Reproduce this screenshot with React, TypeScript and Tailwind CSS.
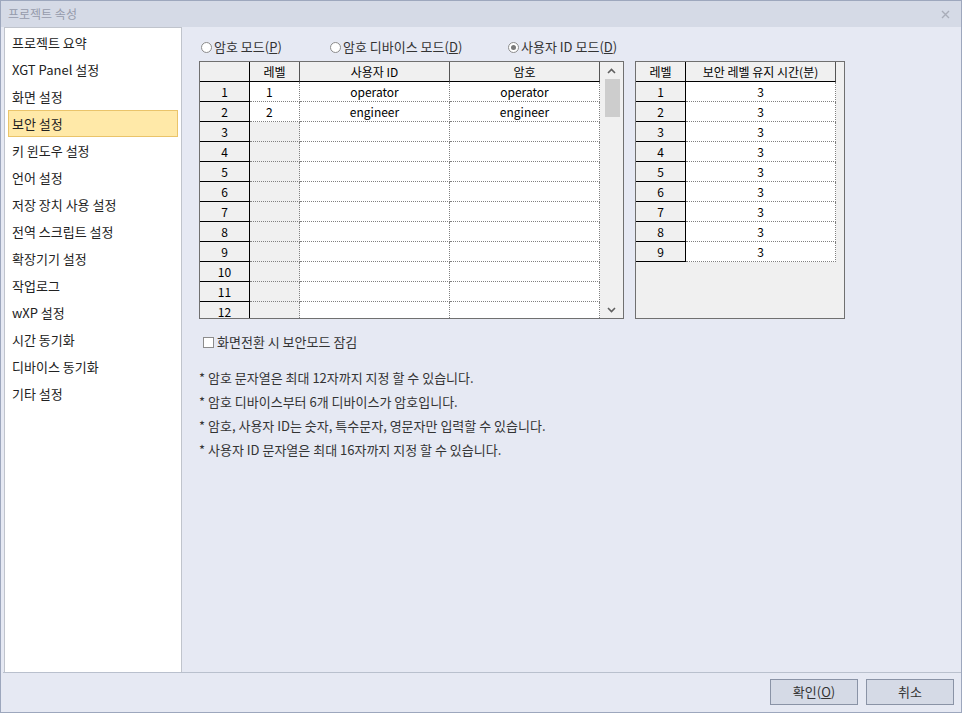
import React from 'react';

const menuItems = [
  '프로젝트 요약',
  'XGT Panel 설정',
  '화면 설정',
  '보안 설정',
  '키 윈도우 설정',
  '언어 설정',
  '저장 장치 사용 설정',
  '전역 스크립트 설정',
  '확장기기 설정',
  '작업로그',
  'wXP 설정',
  '시간 동기화',
  '디바이스 동기화',
  '기타 설정',
];

const users = [
  { level: '1', id: 'operator', pw: 'operator' },
  { level: '2', id: 'engineer', pw: 'engineer' },
];

const notes = [
  '* 암호 문자열은 최대 12자까지 지정 할 수 있습니다.',
  '* 암호 디바이스부터 6개 디바이스가 암호입니다.',
  '* 암호, 사용자 ID는 숫자, 특수문자, 영문자만 입력할 수 있습니다.',
  '* 사용자 ID 문자열은 최대 16자까지 지정 할 수 있습니다.',
];

const Radio = ({ label, hot, checked }: { label: string; hot: string; checked?: boolean }) => (
  <div className="flex items-center gap-[2px]">
    <span className="w-[11px] h-[11px] rounded-full border border-[#8c8c8c] bg-white flex items-center justify-center">
      {checked && <span className="w-[5px] h-[5px] rounded-full bg-[#7a7a7a]" />}
    </span>
    <span>
      {label}(<span className="underline">{hot}</span>)
    </span>
  </div>
);

const Chevron = ({ up }: { up?: boolean }) => (
  <svg width="9" height="6" viewBox="0 0 9 6">
    <path
      d={up ? 'M1 5 L4.5 1.5 L8 5' : 'M1 1 L4.5 4.5 L8 1'}
      fill="none"
      stroke="#606060"
      strokeWidth="1.6"
    />
  </svg>
);

export default function App() {
  const rows = Array.from({ length: 12 }, (_, i) => i + 1);
  const levels = Array.from({ length: 9 }, (_, i) => i + 1);

  return (
    <div
      className="w-[962px] h-[713px] border border-[#9da7bd] bg-[#e6e9f3] flex flex-col overflow-hidden text-[#222]"
      style={{ fontFamily: '"Noto Sans CJK KR", "Noto Sans", sans-serif' }}
    >
      {/* Title bar */}
      <div className="h-[26px] bg-[#d5dae6] flex items-center justify-between pl-[7px] pr-[11px] shrink-0">
        <span className="text-[12px] text-[#959bab]">프로젝트 속성</span>
        <svg width="9" height="9" viewBox="0 0 9 9">
          <path d="M1 1 L8 8 M8 1 L1 8" stroke="#a9adb9" strokeWidth="1.4" />
        </svg>
      </div>

      {/* Body */}
      <div className="flex flex-1 min-h-0 pl-[3px]">
        <div className="w-[178px] border-l border-t border-r border-[#c0c4cc] bg-white pt-[1px] px-[3px] shrink-0">
          {menuItems.map((item, i) => (
            <div
              key={item}
              className={
                i === 3
                  ? 'h-[27px] flex items-center pl-[3px] text-[13px] bg-[#ffe9a8] border border-[#eac46a]'
                  : 'h-[27px] flex items-center pl-[4px] text-[13px]'
              }
            >
              {item}
            </div>
          ))}
        </div>

        <div className="flex-1 flex flex-col pl-[17px] pt-[10px] text-[13px] text-[#333]">
          {/* Mode radios */}
          <div className="h-[20px] flex items-center pl-[2px]">
            <div className="w-[129px]">
              <Radio label="암호 모드" hot="P" />
            </div>
            <div className="w-[178px]">
              <Radio label="암호 디바이스 모드" hot="D" />
            </div>
            <Radio label="사용자 ID 모드" hot="D" checked />
          </div>

          {/* Tables */}
          <div className="flex gap-[11px] mt-[4px] text-[12px] text-black">
            <div className="w-[425px] h-[258px] border border-[#707070] flex bg-white">
              <div className="w-[400px] overflow-hidden">
                <div className="flex h-[20px]">
                  <div className="w-[50px] bg-[#f0f0f0] border-r border-b border-black" />
                  <div className="w-[50px] bg-[#f0f0f0] border-r border-b border-r-[#555] border-b-black flex items-center justify-center">레벨</div>
                  <div className="w-[150px] bg-[#f0f0f0] border-r border-b border-r-[#555] border-b-black flex items-center justify-center">사용자 ID</div>
                  <div className="w-[150px] bg-[#f0f0f0] border-r border-b border-r-[#555] border-b-black flex items-center justify-center">암호</div>
                </div>
                {rows.map((r) => {
                  const u = users[r - 1];
                  return (
                    <div key={r} className="flex h-[20px] shrink-0">
                      <div className="w-[50px] bg-[#f0f0f0] border-r border-b border-black flex items-center justify-center">{r}</div>
                      <div
                        className={
                          u
                            ? 'w-[50px] bg-white border-r border-b border-dotted border-[#808080] flex items-center pl-[16px]'
                            : 'w-[50px] bg-[#f0f0f0] border-r border-b border-dotted border-[#808080]'
                        }
                      >
                        {u?.level}
                      </div>
                      <div className="w-[150px] border-r border-b border-dotted border-[#808080] flex items-center justify-center">{u?.id}</div>
                      <div className="w-[150px] border-r border-b border-dotted border-[#808080] flex items-center justify-center">{u?.pw}</div>
                    </div>
                  );
                })}
              </div>
              <div className="w-[23px] bg-[#f0f0f0] flex flex-col items-center">
                <div className="h-[17px] flex items-center justify-center">
                  <Chevron up />
                </div>
                <div className="w-[15px] h-[38px] bg-[#cdcdcd] ml-[1px]" />
                <div className="flex-1" />
                <div className="h-[17px] flex items-center justify-center">
                  <Chevron />
                </div>
              </div>
            </div>

            <div className="w-[210px] h-[258px] border border-[#707070] bg-[#f0f0f0]">
              <div className="flex h-[20px]">
                <div className="w-[50px] bg-[#f0f0f0] border-r border-b border-black flex items-center justify-center">레벨</div>
                <div className="w-[150px] bg-[#f0f0f0] border-r border-b border-r-[#555] border-b-black flex items-center justify-center">보안 레벨 유지 시간(분)</div>
              </div>
              {levels.map((l) => (
                <div key={l} className="flex h-[20px]">
                  <div className="w-[50px] bg-[#f0f0f0] border-r border-b border-black flex items-center justify-center">{l}</div>
                  <div className="w-[150px] bg-white border-r border-b border-dotted border-[#808080] flex items-center justify-center">3</div>
                </div>
              ))}
            </div>
          </div>

          {/* Checkbox */}
          <div className="h-[20px] mt-[13px] flex items-center gap-[3px] ml-[4px]">
            <span className="w-[11px] h-[11px] border border-[#8c8c8c] bg-white" />
            <span>화면전환 시 보안모드 잠김</span>
          </div>

          {/* Notes */}
          <div className="mt-[14px] flex flex-col text-[13px] text-[#333]">
            {notes.map((n) => (
              <div key={n} className="h-[24px] flex items-center">
                {n}
              </div>
            ))}
          </div>
        </div>
      </div>

      {/* Footer */}
      <div className="h-[40px] shrink-0 ml-[2px] border-t border-[#b9c0cd] flex justify-end items-start pt-[6px] pr-[7px] gap-[8px] text-[13px] text-[#333]">
        <button className="w-[88px] h-[26px] bg-[#d5dae6] border border-[#8a93a6] flex items-center justify-center">
          확인(<span className="underline">O</span>)
        </button>
        <button className="w-[88px] h-[26px] bg-[#d5dae6] border border-[#8a93a6] flex items-center justify-center">
          취소
        </button>
      </div>
    </div>
  );
}
